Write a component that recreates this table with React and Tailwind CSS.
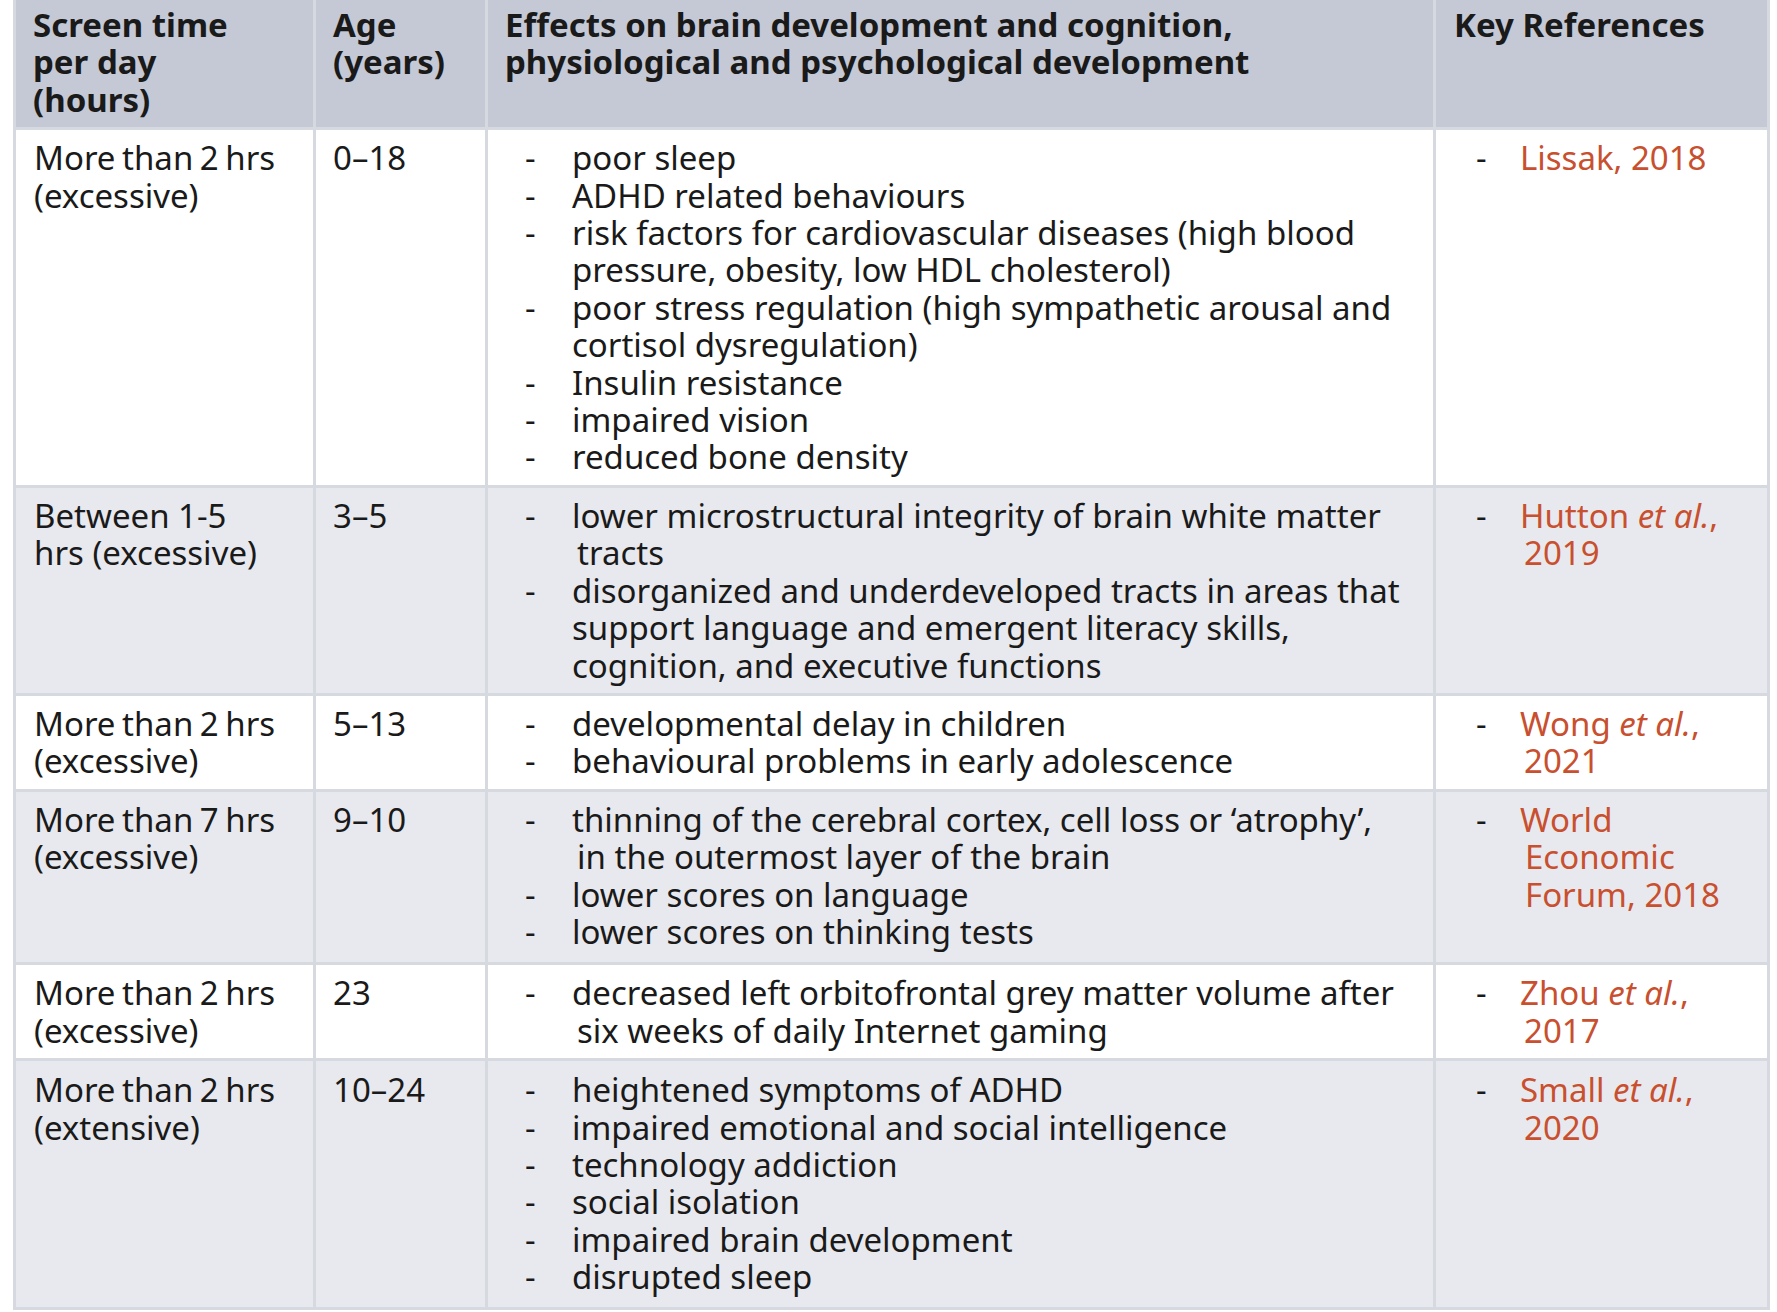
const rows = [
  {
    time: ["More than 2 hrs", "(excessive)"],
    age: "0–18",
    effects: [
      ["poor sleep"],
      ["ADHD related behaviours"],
      ["risk factors for cardiovascular diseases (high blood", "pressure, obesity, low HDL cholesterol)"],
      ["poor stress regulation (high sympathetic arousal and", "cortisol dysregulation)"],
      ["Insulin resistance"],
      ["impaired vision"],
      ["reduced bone density"],
    ],
    ref: { name: "Lissak, 2018", etal: false },
    pad: "py-[9px]",
  },
  {
    time: ["Between 1-5", "hrs (excessive)"],
    age: "3–5",
    effects: [
      ["lower microstructural integrity of brain white matter", " tracts"],
      [
        "disorganized and underdeveloped tracts in areas that",
        "support language and emergent literacy skills,",
        "cognition, and executive functions",
      ],
    ],
    ref: { name: "Hutton", etal: true, year: "2019" },
    pad: "py-[9px]",
  },
  {
    time: ["More than 2 hrs", "(excessive)"],
    age: "5–13",
    effects: [["developmental delay in children"], ["behavioural problems in early adolescence"]],
    ref: { name: "Wong", etal: true, year: "2021" },
    pad: "py-[9px]",
  },
  {
    time: ["More than 7 hrs", "(excessive)"],
    age: "9–10",
    effects: [
      ["thinning of the cerebral cortex, cell loss or ‘atrophy’,", " in the outermost layer of the brain"],
      ["lower scores on language"],
      ["lower scores on thinking tests"],
    ],
    ref: { lines: ["World", " Economic", " Forum, 2018"] },
    pad: "pt-[9px] pb-[12px]",
  },
  {
    time: ["More than 2 hrs", "(excessive)"],
    age: "23",
    effects: [["decreased left orbitofrontal grey matter volume after", " six weeks of daily Internet gaming"]],
    ref: { name: "Zhou", etal: true, year: "2017" },
    pad: "py-[9px]",
  },
  {
    time: ["More than 2 hrs", "(extensive)"],
    age: "10–24",
    effects: [
      ["heightened symptoms of ADHD"],
      ["impaired emotional and social intelligence"],
      ["technology addiction"],
      ["social isolation"],
      ["impaired brain development"],
      ["disrupted sleep"],
    ],
    ref: { name: "Small", etal: true, year: "2020" },
    pad: "pt-[10px] pb-[11px]",
  },
];

function Line({ text }) {
  const indent = text.startsWith(" ");
  return <div className={indent ? "pl-[5px] whitespace-nowrap" : "whitespace-nowrap"}>{indent ? text.slice(1) : text}</div>;
}

function Ref({ ref: r }) {
  let lines;
  if (r.lines) {
    lines = r.lines.map((l, i) => <Line key={i} text={l} />);
  } else if (r.etal) {
    lines = [
      <div key="a" className="whitespace-nowrap">
        {r.name} <i>et al.</i>,
      </div>,
      <div key="b" className="pl-[4px]">
        {r.year}
      </div>,
    ];
  } else {
    lines = [<div key="a" className="whitespace-nowrap">{r.name}</div>];
  }
  return (
    <div className="flex">
      <span className="w-[84px] pl-[40px] shrink-0 text-[#1a1a1a]">-</span>
      <div className="text-[#c8502f]">{lines}</div>
    </div>
  );
}

export default function App() {
  return (
    <div
      className="min-h-screen bg-white text-[#1a1a1a] text-[33px] leading-[37.4px]"
      style={{ fontFamily: '"Noto Sans", "Open Sans", sans-serif' }}
    >
      <div className="ml-[13px] w-[1757px] bg-[#d6d9e0] px-[3px] pb-[3px] flex flex-col gap-[3px]">
        <div className="grid grid-cols-[297px_169px_945px_331px] gap-[3px] font-bold">
          <div className="bg-[#c4c9d5] pl-[17px] pt-[6px] pb-[9px]">
            Screen time
            <br />
            per day
            <br />
            (hours)
          </div>
          <div className="bg-[#c4c9d5] pl-[17px] pt-[6px]">
            Age
            <br />
            (years)
          </div>
          <div className="bg-[#c4c9d5] pl-[17px] pt-[6px] whitespace-nowrap">
            Effects on brain development and cognition,
            <br />
            physiological and psychological development
          </div>
          <div className="bg-[#c4c9d5] pl-[18px] pt-[6px] whitespace-nowrap">Key References</div>
        </div>
        {rows.map((row, i) => {
          const bg = i % 2 === 0 ? "bg-white" : "bg-[#e8e9ee]";
          const pad = row.pad;
          return (
            <div key={i} className="grid grid-cols-[297px_169px_945px_331px] gap-[3px]">
              <div className={`${bg} pl-[18px] ${pad}`}>
                {row.time.map((t, j) => (
                  <div
                    key={j}
                    className={t.startsWith("More") ? "whitespace-nowrap [word-spacing:-2px]" : "whitespace-nowrap"}
                  >
                    {t}
                  </div>
                ))}
              </div>
              <div className={`${bg} pl-[17px] ${pad}`}>{row.age}</div>
              <div className={`${bg} ${pad}`}>
                {row.effects.map((item, j) => (
                  <div key={j} className="flex">
                    <span className="w-[84px] pl-[37px] shrink-0">-</span>
                    <div>
                      {item.map((l, k) => (
                        <Line key={k} text={l} />
                      ))}
                    </div>
                  </div>
                ))}
              </div>
              <div className={`${bg} ${pad}`}>
                <Ref ref={row.ref} />
              </div>
            </div>
          );
        })}
      </div>
    </div>
  );
}
